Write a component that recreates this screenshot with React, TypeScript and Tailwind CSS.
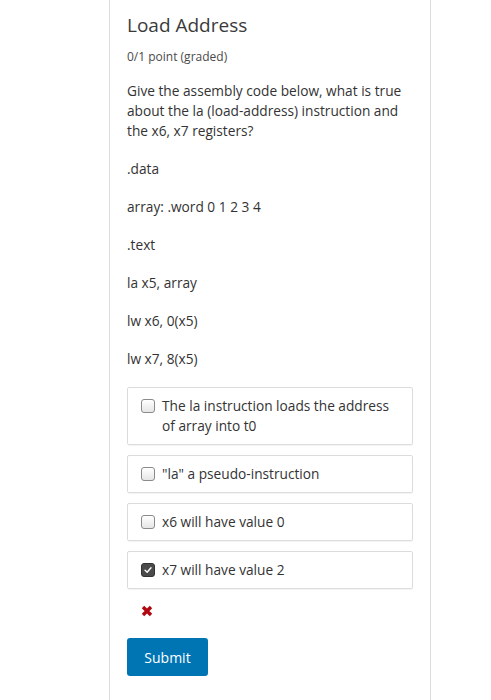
const codeLines = ['.data', 'array: .word 0 1 2 3 4', '.text', 'la x5, array', 'lw x6, 0(x5)', 'lw x7, 8(x5)']

const options = [
  { label: 'The la instruction loads the address of array into t0', checked: false },
  { label: '"la" a pseudo-instruction', checked: false },
  { label: 'x6 will have value 0', checked: false },
  { label: 'x7 will have value 2', checked: true },
]

function Checkbox({ checked }: { checked: boolean }) {
  if (checked) {
    return (
      <span className="mt-[3px] flex h-[14px] w-[14px] shrink-0 items-center justify-center rounded-[3px] border border-[#333] bg-[#4a4a4a]">
        <svg viewBox="0 0 12 12" className="h-[10px] w-[10px]">
          <path d="M2.5 6.3 L5 8.6 L9.6 3.4" fill="none" stroke="#fff" strokeWidth="1.7" strokeLinecap="round" strokeLinejoin="round" />
        </svg>
      </span>
    )
  }
  return (
    <span className="mt-[3px] h-[14px] w-[14px] shrink-0 rounded-[3px] border border-[#8a8a8a] bg-gradient-to-b from-white to-[#e6e6e6]" />
  )
}

export default function App() {
  return (
    <div className="min-h-[700px] bg-white" style={{ fontFamily: '"Open Sans", sans-serif' }}>
      <div className="ml-[109px] min-h-[700px] w-[322px] border-x border-[#dedede] px-[17px] pt-[11px] text-[#333]">
        <h2 className="text-[19px] leading-[28px] font-normal text-[#3a3a3a]">Load Address</h2>
        <div className="mt-[9px] text-[12px] leading-[18px] text-[#4a4a4a]">0/1 point (graded)</div>

        <p className="mt-[15px] text-[13.7px] leading-[20px]">
          Give the assembly code below, what is true about the la (load-address) instruction and the x6, x7 registers?
        </p>

        {codeLines.map((line) => (
          <p key={line} className="mt-[18px] text-[13.7px] leading-[20px]">{line}</p>
        ))}

        <div className="mt-[18px] flex flex-col gap-[10px]">
          {options.map((opt) => (
            <label
              key={opt.label}
              className="flex gap-[7px] rounded-[2px] border border-[#dcdcdc] py-[8px] pr-[14px] pl-[13px] text-[13.7px] leading-[20px] shadow-[0_1px_1px_rgba(0,0,0,0.05)]"
            >
              <Checkbox checked={opt.checked} />
              <span>{opt.label}</span>
            </label>
          ))}
        </div>

        <div className="mt-[16px] pl-[14px]">
          <svg viewBox="0 0 12 12" className="h-[12px] w-[12px]">
            <path d="M2 2 L10 10 M10 2 L2 10" stroke="#b20610" strokeWidth="3.4" strokeLinecap="butt" />
          </svg>
        </div>

        <button className="mt-[21px] h-[38px] w-[81px] rounded-[3px] bg-[#0075b4] text-[14px] text-white">
          Submit
        </button>
      </div>
    </div>
  )
}
